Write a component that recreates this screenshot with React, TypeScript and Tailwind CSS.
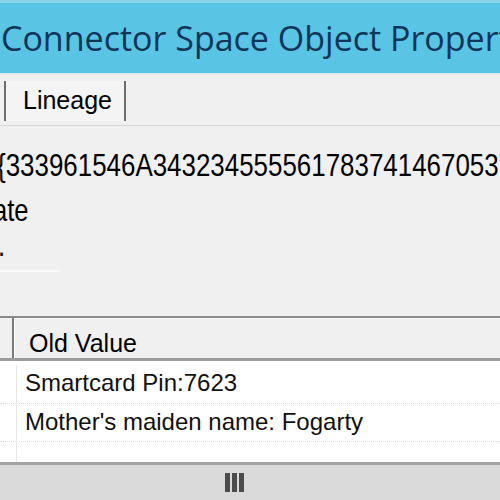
export default function App() {
  return (
    <div className="w-[500px] h-[500px] overflow-hidden bg-[#f0f0f0] flex flex-col font-['Liberation_Sans',Arial,sans-serif] text-black">
      {/* title bar */}
      <div className="h-[73px] shrink-0 bg-[#5ac4e5] border-t-[3px] border-[#88d4ec] pt-[18px] pl-[1px] overflow-hidden">
        <div className="text-[34px] leading-[34px] text-[#0f3558] font-['Open_Sans',sans-serif] whitespace-nowrap">
          Connector Space Object Properties
        </div>
      </div>
      <div className="h-[2px] shrink-0 bg-[#e2eaee]" />

      {/* tab strip */}
      <div className="h-[51px] shrink-0 flex items-end pl-[4px] border-b border-[#d6d6d6]">
        <div className="h-[40px] w-[122px] mb-[4px] border-x-2 border-[#6e6e6e] bg-[#f4f4f4] pl-[17px] pt-[7px]">
          <div className="text-[25px] leading-[25px]">Lineage</div>
        </div>
      </div>

      {/* details */}
      <div className="h-[190px] shrink-0 pt-[23px] overflow-hidden">
        <div className="text-[32px] leading-[32px] whitespace-nowrap origin-left scale-x-[0.81] -ml-[3px]">
          {"{333961546A343234555561783741467053780}"}
        </div>
        <div className="mt-[13px] text-[32px] leading-[32px] whitespace-nowrap origin-left scale-x-[0.8] -ml-[54px]">
          Update
        </div>
        <div className="mt-[3px] text-[32px] leading-[32px] whitespace-nowrap origin-left scale-x-[0.8] -ml-[2px]">
          .
        </div>
        <div className="mt-[9px] h-[2px] w-[60px] bg-[#f9f9f9]" />
      </div>

      {/* list view */}
      <div className="flex-1 flex flex-col bg-white">
        {/* header */}
        <div className="h-[45px] shrink-0 flex bg-[#f0f0f0] border-t-2 border-[#8a8a8a] border-b-[3px] border-b-[#9c9c9c]">
          <div className="w-[14px] shrink-0 border-r-2 border-[#7a7a7a]" />
          <div className="w-px shrink-0 bg-white" />
          <div className="flex-1 pl-[14px] pt-[12px] border-t border-[#fafafa]">
            <div className="text-[25px] leading-[25px]">Old Value</div>
          </div>
        </div>
        {/* rows */}
        <div className="h-[101px] shrink-0 flex flex-col pt-[4px]">
          <div className="h-[39px] shrink-0 flex border-b border-dotted border-[#dcdcdc]">
            <div className="w-[17px] shrink-0 border-r border-[#e6e6e6]" />
            <div className="pl-[8px] pt-[6px] text-[24px] leading-[24px] text-[#111]">Smartcard Pin:7623</div>
          </div>
          <div className="h-[38px] shrink-0 flex border-b border-dotted border-[#dcdcdc]">
            <div className="w-[17px] shrink-0 border-r border-[#e6e6e6]" />
            <div className="pl-[8px] pt-[6px] text-[24px] leading-[24px] text-[#111]">Mother's maiden name: Fogarty</div>
          </div>
          <div className="flex-1 flex">
            <div className="w-[17px] shrink-0 border-r border-[#e6e6e6]" />
          </div>
        </div>
        {/* scrollbar */}
        <div className="flex-1 bg-[#dadada] border-t-[3px] border-[#a2a2a2] flex items-center pl-[225px] gap-[2px]">
          <div className="w-[5px] h-[19px] bg-[#4c4c4c]" />
          <div className="w-[5px] h-[19px] bg-[#4c4c4c]" />
          <div className="w-[5px] h-[19px] bg-[#4c4c4c]" />
        </div>
      </div>
    </div>
  );
}
